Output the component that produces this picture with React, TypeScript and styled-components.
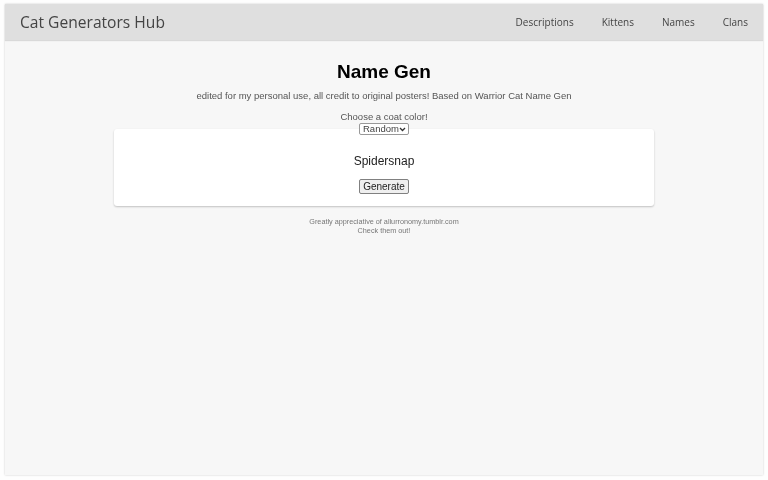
import { createGlobalStyle } from 'styled-components';
import styled from 'styled-components';

const GlobalStyle = createGlobalStyle`
    html, body {
        margin: 0;
        height: 100%;
        background-color: #fefefe;
        font-family: 'Liberation Sans', Arial, sans-serif;
    }
`;

const navLinks = ['Descriptions', 'Kittens', 'Names', 'Clans'];

const chevron =
    "url(\"data:image/svg+xml,%3Csvg xmlns='http://www.w3.org/2000/svg' width='7' height='5'%3E%3Cpath d='M1 1l2.5 2.5L6 1' fill='none' stroke='%23333' stroke-width='1.3'/%3E%3C/svg%3E\")";

const App = () => {
    return (
        <Page>
            <GlobalStyle />
            <Panel>
                <Header>
                    <Brand>Cat Generators Hub</Brand>
                    <Nav>
                        {navLinks.map((link) => (
                            <NavLink key={link} href='#'>
                                {link}
                            </NavLink>
                        ))}
                    </Nav>
                </Header>
                <Main>
                    <Title>Name Gen</Title>
                    <Subtitle>
                        edited for my personal use, all credit to original
                        posters! Based on Warrior Cat Name Gen
                    </Subtitle>
                    <ChooseLabel>Choose a coat color!</ChooseLabel>
                    <CoatSelect defaultValue='Random'>
                        <option>Random</option>
                    </CoatSelect>
                    <Card>
                        <GeneratedName>Spidersnap</GeneratedName>
                        <GenerateButton type='button'>Generate</GenerateButton>
                    </Card>
                    <Credit>
                        Greatly appreciative of allurronomy.tumblr.com
                        <br />
                        Check them out!
                    </Credit>
                </Main>
            </Panel>
        </Page>
    );
};

const Page = styled.div`
    box-sizing: border-box;
    height: 480px;
    padding: 4px 5px;
    overflow: hidden;
    will-change: transform;
`;

const Panel = styled.div`
    height: 471px;
    background-color: #f7f7f7;
    box-shadow: 0 0 2px rgba(0, 0, 0, 0.2);
`;

const Header = styled.header`
    display: flex;
    align-items: center;
    justify-content: space-between;
    height: 36px;
    padding: 0 15px;
    background-color: #dfdfdf;
    box-shadow: 0 1px 1px rgba(0, 0, 0, 0.12);
    font-family: 'Open Sans', sans-serif;
    color: #444;
`;

const Brand = styled.div`
    font-size: 15.6px;
`;

const Nav = styled.nav`
    display: flex;
    gap: 28px;
`;

const NavLink = styled.a`
    font-size: 10px;
    color: #444;
    text-decoration: none;
`;

const Main = styled.main`
    display: flex;
    flex-direction: column;
    align-items: center;
    padding-top: 21px;
`;

const Title = styled.h1`
    margin: 0;
    font-size: 19px;
    line-height: 21px;
    color: #000;
`;

const Subtitle = styled.p`
    margin: 8px 0 0;
    font-size: 9.5px;
    line-height: 12px;
    color: #555;
`;

const ChooseLabel = styled.p`
    margin: 9px 0 0;
    font-size: 9.5px;
    line-height: 12px;
    color: #555;
`;

const CoatSelect = styled.select`
    position: relative;
    z-index: 1;
    box-sizing: border-box;
    width: 50px;
    height: 12px;
    padding: 0 0 0 3px;
    appearance: none;
    font-family: 'Liberation Sans', Arial, sans-serif;
    font-size: 9.5px;
    line-height: 10px;
    color: #444;
    background: #fff ${chevron} no-repeat right 2px center;
    border: 1px solid #999;
    border-radius: 2px;
`;

const Card = styled.section`
    display: flex;
    flex-direction: column;
    align-items: center;
    box-sizing: border-box;
    width: 540px;
    height: 77px;
    margin-top: -6px;
    padding-top: 25px;
    background-color: #fff;
    border-radius: 3px;
    box-shadow: 0 1px 2px rgba(0, 0, 0, 0.22);
`;

const GeneratedName = styled.div`
    font-size: 12px;
    line-height: 14px;
    color: #222;
`;

const GenerateButton = styled.button`
    box-sizing: border-box;
    width: 50px;
    height: 15px;
    margin-top: 11px;
    padding: 0;
    font-family: 'Liberation Sans', Arial, sans-serif;
    font-size: 10px;
    color: #222;
    background-color: #efefef;
    border: 1px solid #808080;
    border-radius: 2px;
`;

const Credit = styled.p`
    margin: 11px 0 0;
    font-size: 7.25px;
    line-height: 9px;
    text-align: center;
    color: #777;
`;

export default App;
